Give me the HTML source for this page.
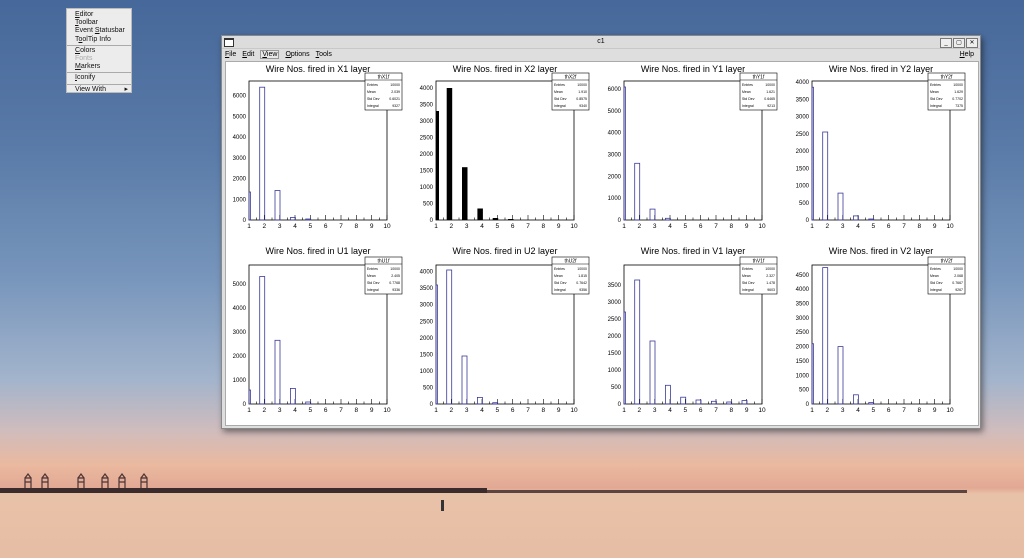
<!DOCTYPE html>
<html><head><meta charset="utf-8"><style>
html,body{margin:0;padding:0;width:1024px;height:558px;overflow:hidden;font-family:"Liberation Sans",sans-serif}
body{position:relative;background:linear-gradient(#46689a 0px,#5a7ba8 150px,#7896bc 280px,#a3b4cc 380px,#cfbcbd 430px,#eab99f 465px,#e2a894 488px,#e8c2a8 494px,#e6bda5 558px)}
.menu{position:absolute;left:66px;top:8px;width:66px;height:85px;background:#ececec;border:1px solid #bbb;font-size:7px;color:#111;box-sizing:border-box;padding-top:2px;overflow:hidden}
.menu div{height:8.2px;line-height:8.2px;padding-left:8px}
.menu hr{margin:1px 0;border:0;border-top:1px solid #aaa;height:0}
.win{position:absolute;left:221px;top:35px;width:758px;height:392px;background:#dedede;border:1px solid #888;box-shadow:2px 3px 6px rgba(0,0,0,.45)}
.tb{height:12px;background:#dcdcdc;border-bottom:1px solid #c8c8c8;position:relative;font-size:7px;text-align:center;line-height:12px}
.mb{height:12px;font-size:7px;line-height:12px;position:relative}
.mb span{margin-left:3px;margin-right:3px}
.cv{position:absolute;left:3px;top:25px;width:752px;height:363px;background:#fff;border:1px solid #aaa}
.btn{position:absolute;top:2px;width:10px;height:8px;border:1px solid #777;background:#eee;font-size:6px;line-height:8px;text-align:center}
</style></head><body>
<div style="position:absolute;left:0;top:488px;width:487px;height:5px;background:#3a2c2c"></div>
<div style="position:absolute;left:487px;top:490px;width:480px;height:3px;background:#5a4540"></div>
<svg style="position:absolute;left:0;top:470px" width="160" height="22"><g fill="none" stroke="#4a3434" stroke-width="1.2">
<path d="M25 18V8h6v10M25 8l3-4 3 4M25 12h6"/><path d="M42 18V8h6v10M42 8l3-4 3 4M42 12h6"/><path d="M78 18V8h6v10M78 8l3-4 3 4M78 12h6"/><path d="M102 18V8h6v10M102 8l3-4 3 4M102 12h6"/><path d="M119 18V8h6v10M119 8l3-4 3 4M119 12h6"/><path d="M141 18V8h6v10M141 8l3-4 3 4M141 12h6"/></g></svg>
<div style="position:absolute;left:441px;top:500px;width:3px;height:11px;background:#333"></div>

<div class="menu">
<div><u>E</u>ditor</div><div><u>T</u>oolbar</div><div>Event <u>S</u>tatusbar</div><div>T<u>o</u>olTip Info</div><hr>
<div><u>C</u>olors</div><div style="color:#aaa">Fonts</div><div><u>M</u>arkers</div><hr><div><u>I</u>conify</div><hr><div><u>V</u>iew With<span style="float:right;margin-right:3px">▸</span></div>
</div>

<div class="win">
<div class="tb"><div style="position:absolute;left:2px;top:2px;width:8px;height:6px;border:1px solid #333;border-top-width:2px;background:#fff"></div>c1
<div class="btn" style="right:28px">_</div><div class="btn" style="right:15px">▢</div><div class="btn" style="right:2px">✕</div></div>
<div class="mb"><span><u>F</u>ile</span><span><u>E</u>dit</span><span style="border:1px solid #999;background:#e8e8e8;padding:0 1px"><u>V</u>iew</span><span><u>O</u>ptions</span><span><u>T</u>ools</span><span style="position:absolute;right:3px"><u>H</u>elp</span></div>
<div class="cv"></div>
</div>

<svg style="position:absolute;left:0;top:0" width="1024" height="558" font-family="Liberation Sans,sans-serif">
<defs>
<g id="fr"><rect x="0" y="0" width="138" height="139" fill="none" stroke="#000" stroke-width="0.8"/>
<path d="M0 139v-5M15.3 139v-5M30.7 139v-5M46 139v-5M61.3 139v-5M76.7 139v-5M92 139v-5M107.3 139v-5M122.7 139v-5M138 139v-5M7.7 139v-2.5M23 139v-2.5M38.3 139v-2.5M53.7 139v-2.5M69 139v-2.5M84.3 139v-2.5M99.7 139v-2.5M115 139v-2.5M130.3 139v-2.5" stroke="#000" stroke-width="0.6"/>
<g font-size="6.5" text-anchor="middle"><text x="0" y="147">1</text><text x="15.3" y="147">2</text><text x="30.7" y="147">3</text><text x="46" y="147">4</text><text x="61.3" y="147">5</text><text x="76.7" y="147">6</text><text x="92" y="147">7</text><text x="107.3" y="147">8</text><text x="122.7" y="147">9</text><text x="138" y="147">10</text></g>
<rect x="116" y="-8" width="37" height="37" fill="#fff" stroke="#000" stroke-width="0.6"/><line x1="116" y1="-1" x2="153" y2="-1" stroke="#000" stroke-width="0.5"/>
<g font-size="3.5"><text x="118" y="5">Entries</text><text x="118" y="12">Mean</text><text x="118" y="19">Std Dev</text><text x="118" y="26">Integral</text><text x="151" y="5" text-anchor="end">10000</text></g>
</g>
</defs>

<g transform="translate(249,81)"><use href="#fr"/>
<text x="69" y="-9" font-size="9" text-anchor="middle">Wire Nos. fired in X1 layer</text>
<text x="134.5" y="-2.5" font-size="5" text-anchor="middle">thX1f</text>
<g font-size="3.5" text-anchor="end"><text x="151" y="12">2.039</text><text x="151" y="19">0.6021</text><text x="151" y="26">9327</text></g>
<g font-size="6" text-anchor="end"><text x="-3" y="141">0</text><text x="-3" y="120.3">1000</text><text x="-3" y="99.5">2000</text><text x="-3" y="78.8">3000</text><text x="-3" y="58">4000</text><text x="-3" y="37.3">5000</text><text x="-3" y="16.5">6000</text></g>
<g fill="none" stroke="#3a3a9a" stroke-width="0.8"><rect x="0" y="111" width="1.5" height="28"/><rect x="10.7" y="6.2" width="5" height="132.8"/><rect x="26" y="109.5" width="5" height="29.5"/><rect x="41.4" y="136.5" width="5" height="2.5"/><rect x="56.7" y="138" width="5" height="1"/></g></g>

<g transform="translate(436,81)"><use href="#fr"/>
<text x="69" y="-9" font-size="9" text-anchor="middle">Wire Nos. fired in X2 layer</text>
<text x="134.5" y="-2.5" font-size="5" text-anchor="middle">thX2f</text>
<g font-size="3.5" text-anchor="end"><text x="151" y="12">1.910</text><text x="151" y="19">0.8575</text><text x="151" y="26">9340</text></g>
<g font-size="6" text-anchor="end"><text x="-3" y="141">0</text><text x="-3" y="124.5">500</text><text x="-3" y="108">1000</text><text x="-3" y="91.5">1500</text><text x="-3" y="75">2000</text><text x="-3" y="58.5">2500</text><text x="-3" y="42">3000</text><text x="-3" y="25.5">3500</text><text x="-3" y="9">4000</text></g>
<g fill="#000"><rect x="0" y="30" width="3" height="109"/><rect x="10.7" y="7" width="5.5" height="132"/><rect x="26" y="86.2" width="5.5" height="52.8"/><rect x="41.4" y="127.5" width="5.5" height="11.5"/><rect x="56.7" y="137" width="5.5" height="2"/><rect x="72" y="138" width="5.5" height="1"/></g></g>

<g transform="translate(624,81)"><use href="#fr"/>
<text x="69" y="-9" font-size="9" text-anchor="middle">Wire Nos. fired in Y1 layer</text>
<text x="134.5" y="-2.5" font-size="5" text-anchor="middle">thY1f</text>
<g font-size="3.5" text-anchor="end"><text x="151" y="12">1.621</text><text x="151" y="19">0.6465</text><text x="151" y="26">9213</text></g>
<g font-size="6" text-anchor="end"><text x="-3" y="141">0</text><text x="-3" y="119.2">1000</text><text x="-3" y="97.4">2000</text><text x="-3" y="75.5">3000</text><text x="-3" y="53.7">4000</text><text x="-3" y="31.9">5000</text><text x="-3" y="10.1">6000</text></g>
<g fill="none" stroke="#3a3a9a" stroke-width="0.8"><rect x="0" y="6" width="1.5" height="133"/><rect x="10.7" y="82.3" width="5" height="56.7"/><rect x="26" y="128.1" width="5" height="10.9"/><rect x="41.4" y="137.3" width="5" height="1.7"/></g></g>

<g transform="translate(812,81)"><use href="#fr"/>
<text x="69" y="-9" font-size="9" text-anchor="middle">Wire Nos. fired in Y2 layer</text>
<text x="134.5" y="-2.5" font-size="5" text-anchor="middle">thY2f</text>
<g font-size="3.5" text-anchor="end"><text x="151" y="12">1.629</text><text x="151" y="19">0.7702</text><text x="151" y="26">7375</text></g>
<g font-size="6" text-anchor="end"><text x="-3" y="141">0</text><text x="-3" y="123.8">500</text><text x="-3" y="106.5">1000</text><text x="-3" y="89.3">1500</text><text x="-3" y="72">2000</text><text x="-3" y="54.8">2500</text><text x="-3" y="37.5">3000</text><text x="-3" y="20.3">3500</text><text x="-3" y="3">4000</text></g>
<g fill="none" stroke="#3a3a9a" stroke-width="0.8"><rect x="0" y="6.2" width="1.5" height="132.8"/><rect x="10.7" y="51" width="5" height="88"/><rect x="26" y="112.1" width="5" height="26.9"/><rect x="41.4" y="134.9" width="5" height="4.1"/><rect x="56.7" y="138" width="5" height="1"/></g></g>

<g transform="translate(249,265)"><use href="#fr"/>
<text x="69" y="-11" font-size="9" text-anchor="middle">Wire Nos. fired in U1 layer</text>
<text x="134.5" y="-2.5" font-size="5" text-anchor="middle">thU1f</text>
<g font-size="3.5" text-anchor="end"><text x="151" y="12">2.405</text><text x="151" y="19">0.7768</text><text x="151" y="26">9336</text></g>
<g font-size="6" text-anchor="end"><text x="-3" y="141">0</text><text x="-3" y="117">1000</text><text x="-3" y="92.9">2000</text><text x="-3" y="68.9">3000</text><text x="-3" y="44.8">4000</text><text x="-3" y="20.8">5000</text></g>
<g fill="none" stroke="#3a3a9a" stroke-width="0.8"><rect x="0" y="125" width="1.5" height="14"/><rect x="10.7" y="11.5" width="5" height="127.5"/><rect x="26" y="75.3" width="5" height="63.7"/><rect x="41.4" y="123.4" width="5" height="15.6"/><rect x="56.7" y="137" width="5" height="2"/></g></g>

<g transform="translate(436,265)"><use href="#fr"/>
<text x="69" y="-11" font-size="9" text-anchor="middle">Wire Nos. fired in U2 layer</text>
<text x="134.5" y="-2.5" font-size="5" text-anchor="middle">thU2f</text>
<g font-size="3.5" text-anchor="end"><text x="151" y="12">1.815</text><text x="151" y="19">0.7642</text><text x="151" y="26">9356</text></g>
<g font-size="6" text-anchor="end"><text x="-3" y="141">0</text><text x="-3" y="124.5">500</text><text x="-3" y="107.9">1000</text><text x="-3" y="91.4">1500</text><text x="-3" y="74.8">2000</text><text x="-3" y="58.3">2500</text><text x="-3" y="41.7">3000</text><text x="-3" y="25.2">3500</text><text x="-3" y="8.6">4000</text></g>
<g fill="none" stroke="#3a3a9a" stroke-width="0.8"><rect x="0" y="20" width="1.5" height="119"/><rect x="10.7" y="5" width="5" height="134"/><rect x="26" y="91" width="5" height="48"/><rect x="41.4" y="132.4" width="5" height="6.6"/><rect x="56.7" y="137.7" width="5" height="1.3"/></g></g>

<g transform="translate(624,265)"><use href="#fr"/>
<text x="69" y="-11" font-size="9" text-anchor="middle">Wire Nos. fired in V1 layer</text>
<text x="134.5" y="-2.5" font-size="5" text-anchor="middle">thV1f</text>
<g font-size="3.5" text-anchor="end"><text x="151" y="12">2.327</text><text x="151" y="19">1.478</text><text x="151" y="26">9603</text></g>
<g font-size="6" text-anchor="end"><text x="-3" y="141">0</text><text x="-3" y="124">500</text><text x="-3" y="106.9">1000</text><text x="-3" y="89.9">1500</text><text x="-3" y="72.9">2000</text><text x="-3" y="55.9">2500</text><text x="-3" y="38.8">3000</text><text x="-3" y="21.8">3500</text></g>
<g fill="none" stroke="#3a3a9a" stroke-width="0.8"><rect x="0" y="47" width="1.5" height="92"/><rect x="10.7" y="15" width="5" height="124"/><rect x="26" y="76" width="5" height="63"/><rect x="41.4" y="120.3" width="5" height="18.7"/><rect x="56.7" y="132.2" width="5" height="6.8"/><rect x="72" y="135" width="5" height="4"/><rect x="87.4" y="136.3" width="5" height="2.7"/><rect x="102.7" y="137" width="5" height="2"/><rect x="118" y="135.6" width="5" height="3.4"/></g></g>

<g transform="translate(812,265)"><use href="#fr"/>
<text x="69" y="-11" font-size="9" text-anchor="middle">Wire Nos. fired in V2 layer</text>
<text x="134.5" y="-2.5" font-size="5" text-anchor="middle">thV2f</text>
<g font-size="3.5" text-anchor="end"><text x="151" y="12">2.068</text><text x="151" y="19">0.7667</text><text x="151" y="26">9267</text></g>
<g font-size="6" text-anchor="end"><text x="-3" y="141">0</text><text x="-3" y="126.6">500</text><text x="-3" y="112.3">1000</text><text x="-3" y="97.9">1500</text><text x="-3" y="83.6">2000</text><text x="-3" y="69.2">2500</text><text x="-3" y="54.8">3000</text><text x="-3" y="40.5">3500</text><text x="-3" y="26.1">4000</text><text x="-3" y="11.8">4500</text></g>
<g fill="none" stroke="#3a3a9a" stroke-width="0.8"><rect x="0" y="78.7" width="1.5" height="60.3"/><rect x="10.7" y="2.6" width="5" height="136.4"/><rect x="26" y="81.6" width="5" height="57.4"/><rect x="41.4" y="129.8" width="5" height="9.2"/><rect x="56.7" y="137.6" width="5" height="1.4"/></g></g>
</svg>
</body></html>
